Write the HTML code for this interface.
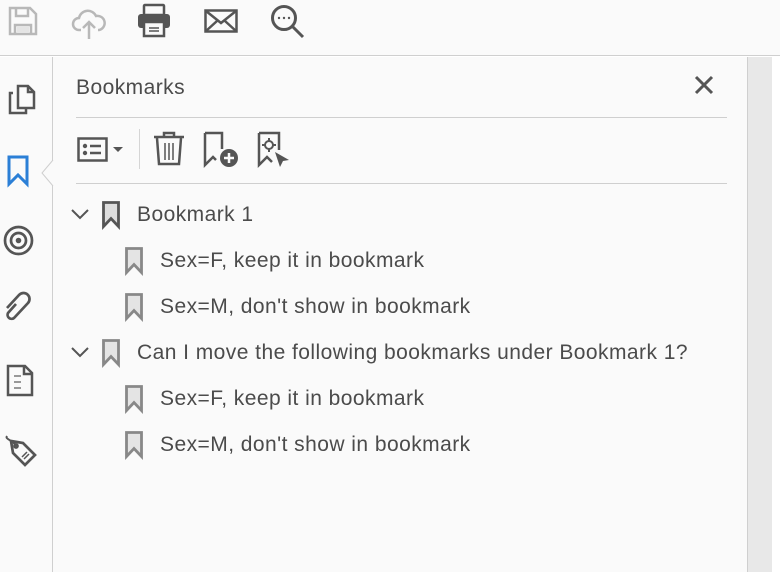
<!DOCTYPE html>
<html><head><meta charset="utf-8"><style>
*{margin:0;padding:0;box-sizing:border-box}
body{width:780px;height:583px;background:#fff;position:relative;overflow:hidden;font-family:"Liberation Sans",sans-serif;color:#4b4b4b}
.top{position:absolute;left:0;top:0;width:780px;height:56px;background:#fafafa;border-bottom:1px solid #cfcfcf}
.rail{position:absolute;left:0;top:57px;width:53px;height:515px;background:#fafafa;border-right:1px solid #cfcfcf}
.panel{position:absolute;left:53px;top:57px;width:694px;height:515px;background:#fafafa}
.strip{position:absolute;left:747px;top:57px;width:25px;height:515px;background:#e8e8e8;border-left:1px solid #cfcfcf}
svg{position:absolute;overflow:visible}
.t{position:absolute;font-size:21px;letter-spacing:0.45px;white-space:nowrap;line-height:24px}
.hr{position:absolute;left:76px;width:651px;height:1px;background:#cfcfcf}
</style></head><body>
<div class="top"></div>
<div class="rail"></div>
<div class="panel"></div>
<div class="strip"></div>
<svg style="left:8px;top:6px" width="32" height="32" fill="none" stroke="#b8b8b8" stroke-width="2.5"><path d="M2 2h20l6 6v20H2z"/><path d="M8 2v8h12V2M7 28V19h16v9"/><rect x="9" y="20" width="12" height="7" fill="#e4e4e4" stroke="none"/></svg>
<svg style="left:72px;top:6px" width="36" height="34" fill="none" stroke="#b8b8b8" stroke-width="2.5"><path d="M9 24H7a6 6 0 0 1 0-12 9 9 0 0 1 17-2 7 7 0 0 1 3 14h-1"/><path d="M17 33V16M11 22l6-6 6 6"/></svg>
<svg style="left:137px;top:4px" width="34" height="34"><rect x="7" y="1" width="20" height="10" rx="1" fill="none" stroke="#555" stroke-width="2.5"/><rect x="1" y="10" width="32" height="14" rx="3" fill="#555"/><rect x="7" y="18" width="20" height="14" fill="#fafafa" stroke="#555" stroke-width="2.5"/><path d="M12 24h10M12 27h10" stroke="#555" stroke-width="1.5"/></svg>
<svg style="left:204px;top:9px" width="34" height="24" fill="none" stroke="#555" stroke-width="2.5"><rect x="1.5" y="1.5" width="31" height="21"/><path d="M2 2l15 12 15-12M2 22l11-10M32 22L21 12"/></svg>
<svg style="left:270px;top:4px" width="36" height="36" fill="none" stroke="#555" stroke-width="3"><circle cx="14" cy="14" r="11.5"/><path d="M23 23l10 10"/><circle cx="9" cy="14" r="1.2" fill="#555" stroke="none"/><circle cx="14" cy="14" r="1.2" fill="#555" stroke="none"/><circle cx="19" cy="14" r="1.2" fill="#555" stroke="none"/></svg>
<svg style="left:6px;top:84px" width="30" height="32" fill="none" stroke="#555" stroke-width="2.5"><path d="M12 2h10l6 6v16H12z"/><path d="M22 2v6h6"/><path d="M7 9H4v20h16v-4"/></svg>
<svg style="left:7px;top:155px" width="24" height="32" fill="none" stroke="#2b7fd6" stroke-width="3"><path d="M2 2h18v27l-9-9-9 9z"/></svg>
<svg style="left:3px;top:225px" width="32" height="32" fill="none" stroke="#555" stroke-width="2.7"><circle cx="15.5" cy="15.5" r="13.5"/><circle cx="15.5" cy="15.5" r="7.5"/><circle cx="15.5" cy="15.5" r="2.8" fill="#555" stroke="none"/></svg>
<svg style="left:2px;top:292px" width="32" height="32" fill="none" stroke="#555" stroke-width="2.7"><path d="M14 12l-8 9a4 4 0 0 0 6 5l14-15a6 6 0 0 0-9-8L5 16"/></svg>
<svg style="left:6px;top:364px" width="28" height="34" fill="none" stroke="#555" stroke-width="2.5"><path d="M2 2h17l7 7v22H2z"/><path d="M18 2v8h8" /><path d="M8 12h7M8 18h7M8 24h7" stroke="#999" stroke-width="2"/></svg>
<svg style="left:2px;top:433px" width="36" height="36" fill="none" stroke="#555" stroke-width="2.7"><path d="M9 8l12 2 12 12-10 10-12-12z"/><circle cx="14" cy="13" r="1.5"/><path d="M14 12C8 6 3 6 5 3" stroke-width="2"/><path d="M20 24l5-5M22 26l5-5" stroke-width="1.5"/></svg>
<svg style="left:41px;top:160px" width="13" height="26"><path d="M12 0L1 13l11 13" fill="#fafafa" stroke="#cfcfcf"/></svg>
<div class="t" style="left:76px;top:76px;font-size:21px">Bookmarks</div>
<svg style="left:695px;top:76px" width="18" height="18" stroke="#555" stroke-width="3"><path d="M1 1l16 16M17 1L1 17"/></svg>
<div class="hr" style="top:117px"></div>
<svg style="left:77px;top:137px" width="50" height="26"><rect x="1.5" y="1.5" width="28" height="22" fill="none" stroke="#555" stroke-width="2.5"/><circle cx="8" cy="9" r="2.2" fill="#555"/><circle cx="8" cy="16" r="2.2" fill="#555"/><path d="M13 9h11M13 16h11" stroke="#555" stroke-width="2.5"/><path d="M36 10h10l-5 5z" fill="#555"/></svg>
<div style="position:absolute;left:139px;top:129px;width:1px;height:40px;background:#d5d5d5"></div>
<svg style="left:153px;top:132px" width="32" height="34" fill="none" stroke="#555" stroke-width="2.5"><path d="M1 5h30M11 5V1h10v4"/><path d="M4 6l2 26h20l2-26"/><path d="M12 11v17M16 11v17M20 11v17" stroke-width="1.5"/></svg>
<svg style="left:203px;top:132px" width="36" height="36"><path d="M2 1h17v16M2 1v32l8-8 3 3" fill="none" stroke="#555" stroke-width="2.5"/><circle cx="26" cy="26" r="9" fill="#555"/><path d="M26 21v10M21 26h10" stroke="#fafafa" stroke-width="2.5"/></svg>
<svg style="left:257px;top:132px" width="34" height="36"><path d="M2 1h20v17M2 1v32l8-8 5 5" fill="none" stroke="#555" stroke-width="2.5"/><circle cx="12" cy="13" r="4" fill="none" stroke="#555" stroke-width="2"/><path d="M12 6v3M12 17v3M5 13h3M16 13h3" stroke="#555" stroke-width="2"/><path d="M18 20l14 8-6 1-3 6z" fill="#555"/></svg>
<div class="hr" style="top:183px"></div>
<svg style="left:71px;top:208px" width="18" height="12" fill="none" stroke="#555" stroke-width="2"><path d="M1 2l8 8 8-8"/></svg>
<svg style="left:102px;top:201px" width="20" height="28"><path d="M1.5 1.5h15v24l-7.5-8-7.5 8z" fill="#ddd" stroke="#555" stroke-width="2.8"/></svg>
<div class="t" style="left:137px;top:203px">Bookmark 1</div>
<svg style="left:125px;top:247px" width="20" height="28"><path d="M1.5 1.5h15v24l-7.5-8-7.5 8z" fill="#e4e4e4" stroke="#888" stroke-width="2.8"/></svg>
<div class="t" style="left:160px;top:249px">Sex=F, keep it in bookmark</div>
<svg style="left:125px;top:293px" width="20" height="28"><path d="M1.5 1.5h15v24l-7.5-8-7.5 8z" fill="#e4e4e4" stroke="#888" stroke-width="2.8"/></svg>
<div class="t" style="left:160px;top:295px">Sex=M, don't show in bookmark</div>
<svg style="left:71px;top:346px" width="18" height="12" fill="none" stroke="#555" stroke-width="2"><path d="M1 2l8 8 8-8"/></svg>
<svg style="left:102px;top:339px" width="20" height="28"><path d="M1.5 1.5h15v24l-7.5-8-7.5 8z" fill="#e4e4e4" stroke="#888" stroke-width="2.8"/></svg>
<div class="t" style="left:137px;top:341px">Can I move the following bookmarks under Bookmark 1?</div>
<svg style="left:125px;top:385px" width="20" height="28"><path d="M1.5 1.5h15v24l-7.5-8-7.5 8z" fill="#e4e4e4" stroke="#888" stroke-width="2.8"/></svg>
<div class="t" style="left:160px;top:387px">Sex=F, keep it in bookmark</div>
<svg style="left:125px;top:431px" width="20" height="28"><path d="M1.5 1.5h15v24l-7.5-8-7.5 8z" fill="#e4e4e4" stroke="#888" stroke-width="2.8"/></svg>
<div class="t" style="left:160px;top:433px">Sex=M, don't show in bookmark</div>
</body></html>
